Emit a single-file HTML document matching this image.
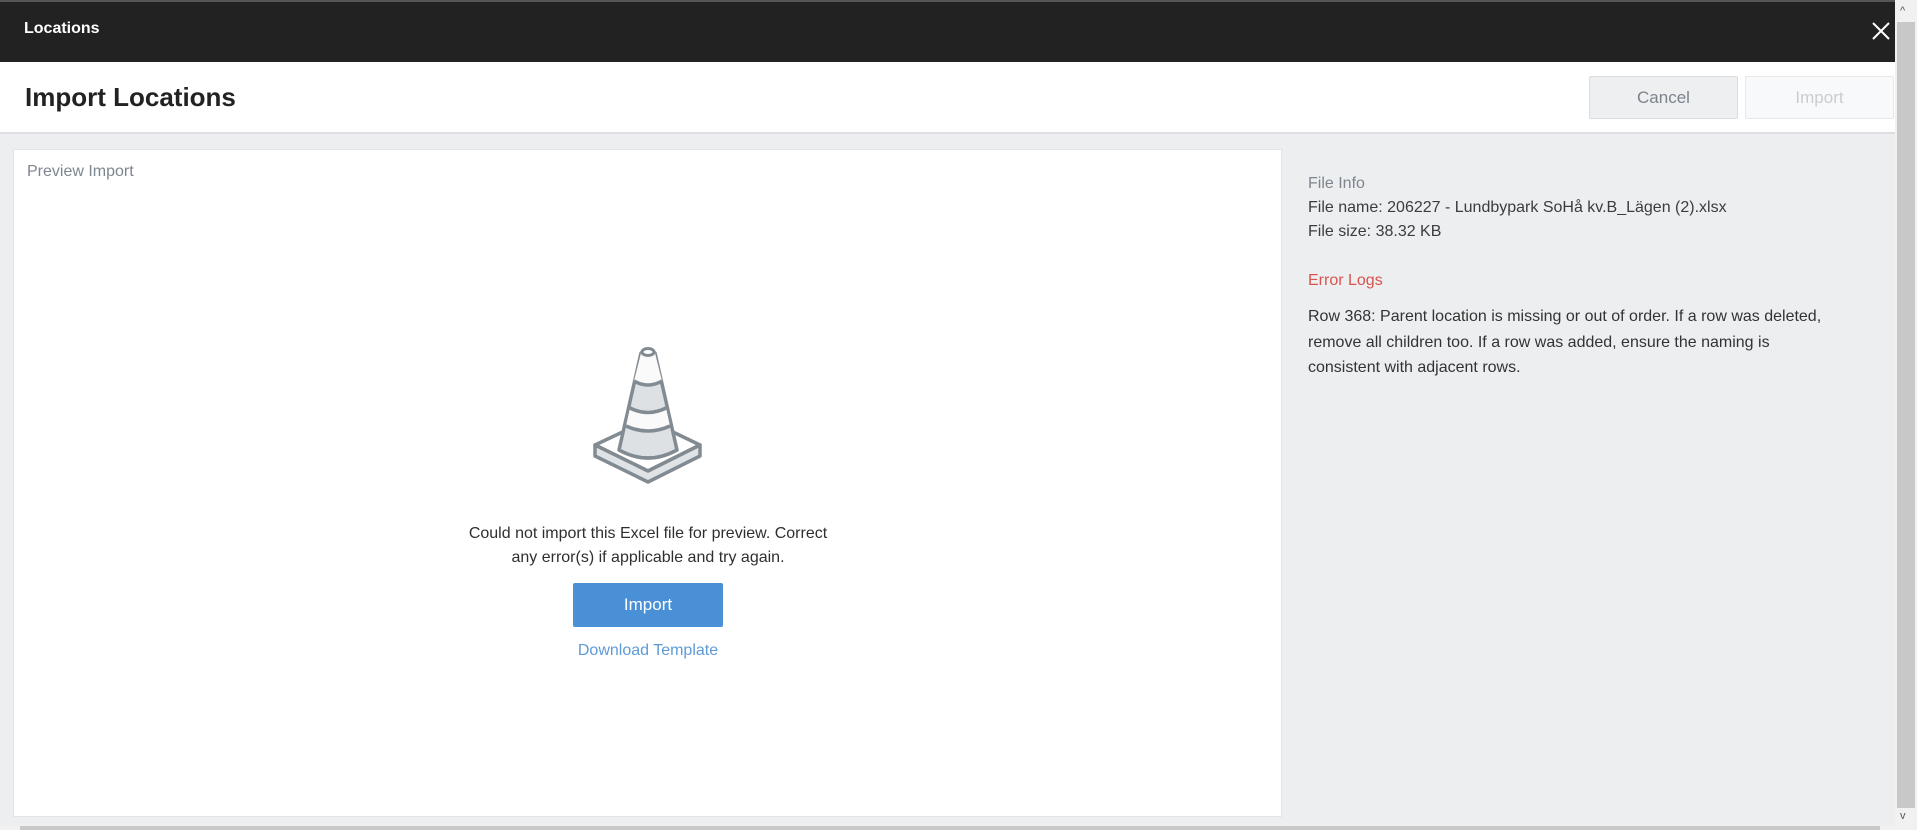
<!DOCTYPE html>
<html><head><meta charset="utf-8"><style>
*{margin:0;padding:0;box-sizing:border-box}
html,body{width:1917px;height:830px;overflow:hidden;background:#edeef0;font-family:"Liberation Sans",sans-serif;position:relative}
.abs{position:absolute}
#top{left:0;top:0;width:1895px;height:62px;background:#222;border-top:2px solid #555}
#hdr{left:0;top:62px;width:1895px;height:72px;background:#fff;border-bottom:2px solid #dcdee1}
.btn{position:absolute;top:76px;height:43px;border:1px solid #d9dcdf;border-radius:2px;font-size:17px;text-align:center;line-height:41px}
#card{left:13px;top:149px;width:1269px;height:668px;background:#fff;border:1px solid #e2e4e6}
.r{font-size:16px;color:#3c3c3c;line-height:24px}
</style></head><body>
<div id="top" class="abs"></div>
<div class="abs" style="left:24px;top:20px;color:#fff;font-weight:bold;font-size:16px">Locations</div>
<svg class="abs" style="left:1870px;top:20px" width="22" height="22" viewBox="0 0 22 22"><path d="M3 3L19 19M19 3L3 19" stroke="#fff" stroke-width="2"/></svg>
<div id="hdr" class="abs"></div>
<div class="abs" style="left:25px;top:82px;font-size:26px;font-weight:bold;color:#222">Import Locations</div>
<div class="btn" style="left:1589px;width:149px;background:#eeeff1;color:#7b838c">Cancel</div>
<div class="btn" style="left:1745px;width:149px;background:#f8f9fa;color:#c9cdd1;border-color:#e6e8ea">Import</div>
<div id="card" class="abs"></div>
<div class="abs" style="left:27px;top:163px;font-size:16px;color:#7d868f">Preview Import</div>
<svg class="abs" style="left:590px;top:340px" width="116" height="145" viewBox="0 0 116 145">
<path d="M5 105L58 80L110 105L58 131Z" fill="#fff" stroke="#838b92" stroke-width="3.5" stroke-linejoin="round"/>
<path d="M5 105V116L58 142L110 116V105L58 131Z" fill="#e0e3e5" stroke="#838b92" stroke-width="3.5" stroke-linejoin="round"/>
<path d="M51 13Q58 8 65 13L87 110Q58 126 29 110Z" fill="#dde1e4" stroke="#838b92" stroke-width="3.5" stroke-linejoin="round"/>
<path d="M51 13Q58 8 65 13L72 41Q58 49 44 41Z" fill="#fafafa"/>
<path d="M40 68Q58 77 76 68L80 86Q58 96 36 86Z" fill="#fafafa"/>
<path d="M44 41Q58 49 72 41M40 68Q58 77 76 68M36 86Q58 96 80 86" fill="none" stroke="#838b92" stroke-width="3.5"/>
<path d="M29 110Q58 126 87 110" fill="none" stroke="#838b92" stroke-width="3.5"/>
<ellipse cx="58" cy="12" rx="6" ry="3.5" fill="#fff" stroke="#838b92" stroke-width="3"/>
</svg>
<div class="abs" style="left:400px;top:522px;width:496px;text-align:center;font-size:16px;line-height:24px;color:#2f2f2f">Could not import this Excel file for preview. Correct<br>any error(s) if applicable and try again.</div>
<div class="abs" style="left:573px;top:583px;width:150px;height:44px;background:#4a90d6;color:#fff;font-size:17px;text-align:center;line-height:44px;border-radius:2px">Import</div>
<div class="abs" style="left:500px;top:642px;width:296px;text-align:center;font-size:16px;color:#5e9ad6">Download Template</div>
<div class="abs r" style="left:1308px;top:172px;color:#7d868f">File Info</div>
<div class="abs r" style="left:1308px;top:196px">File name: 206227 - Lundbypark SoHå kv.B_Lägen (2).xlsx</div>
<div class="abs r" style="left:1308px;top:220px">File size: 38.32 KB</div>
<div class="abs r" style="left:1308px;top:269px;color:#d9534f">Error Logs</div>
<div class="abs r" style="left:1308px;top:304px;width:520px;line-height:25.5px;color:#333">Row 368: Parent location is missing or out of order. If a row was deleted, remove all children too. If a row was added, ensure the naming is consistent with adjacent rows.</div>
<div class="abs" style="left:1895px;top:0;width:22px;height:830px;background:#f1f1f1"></div>
<div class="abs" style="left:1897px;top:22px;width:18px;height:786px;background:#c8c8c8"></div>
<div class="abs" style="left:1900px;top:5px;font-size:11px;color:#555">^</div>
<div class="abs" style="left:1900px;top:810px;font-size:11px;color:#555">v</div>
<div class="abs" style="left:0;top:825px;width:1895px;height:5px;background:#f1f1f1"></div>
<div class="abs" style="left:20px;top:826px;width:1860px;height:4px;background:#c8c8c8"></div>
</body></html>
